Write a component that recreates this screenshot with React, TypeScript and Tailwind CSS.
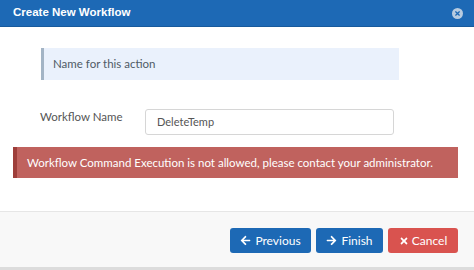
import { FaArrowLeft, FaArrowRight, FaTimes } from "react-icons/fa";

export default function App() {
  return (
    <div className="w-[474px] h-[270px] bg-white flex flex-col overflow-hidden font-['Lato',sans-serif]">
      {/* header */}
      <div className="h-[27px] bg-[#1d69b5] flex items-center justify-between pl-[13px] pr-[11px] border-b border-[#175a9c]">
        <span className="text-white text-[11.5px] font-bold font-['Liberation_Sans',sans-serif]">Create New Workflow</span>
        <span className="w-[11px] h-[11px] rounded-full bg-[#b7cbe0] flex items-center justify-center">
          <FaTimes className="w-[7px] h-[7px] text-[#1d69b5]" />
        </span>
      </div>

      {/* body */}
      <div className="flex-1 flex flex-col">
        <div className="mt-[21px] ml-[41px] w-[358px] h-[32px] bg-[#eaf1fc] border-l-[3px] border-[#a3b4c5] flex items-center pl-[9px]">
          <span className="text-[11.5px] text-[#4f5b66]">Name for this action</span>
        </div>

        <div className="mt-[29px] flex items-start">
          <label className="ml-[40px] w-[105px] text-[11.5px] text-[#555] leading-[16px]">Workflow Name</label>
          <div className="w-[249px] h-[26px] border border-[#d6d6d6] rounded-[3px] flex items-center pl-[11px] text-[11px] text-[#555]">
            DeleteTemp
          </div>
        </div>

        <div className="mt-[12px] ml-[13px] w-[445px] h-[31px] bg-[#c0625e] border-l-[4px] border-[#9e3e3a] flex items-center pl-[10px]">
          <span className="text-white text-[11.5px] whitespace-nowrap">Workflow Command Execution is not allowed, please contact your administrator.</span>
        </div>
      </div>

      {/* footer */}
      <div className="h-[56px] bg-[#f8f8f8] border-t border-[#e6e6e6] flex items-start justify-end pt-[16px] pr-[16px] gap-[5px] text-[12px] text-white">
        <button className="w-[81px] h-[25px] bg-[#1d69b5] rounded-[3px] flex items-center justify-center gap-[4px]">
          <FaArrowLeft className="w-[11px] h-[11px]" />
          Previous
        </button>
        <button className="w-[67px] h-[25px] bg-[#1d69b5] rounded-[3px] flex items-center justify-center gap-[4px]">
          <FaArrowRight className="w-[11px] h-[11px]" />
          Finish
        </button>
        <button className="w-[70px] h-[25px] bg-[#d9534f] rounded-[3px] flex items-center justify-center gap-[3px]">
          <FaTimes className="w-[10px] h-[10px]" />
          Cancel
        </button>
      </div>
      <div className="h-[3px] bg-[#dcdcdc]" />
    </div>
  );
}
